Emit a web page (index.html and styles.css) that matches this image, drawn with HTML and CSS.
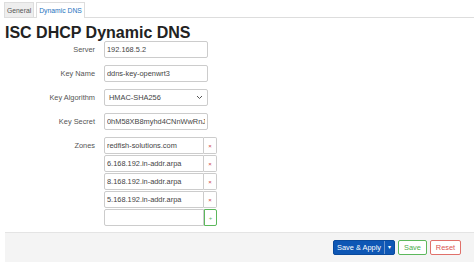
FILE: index.html
```html
<!DOCTYPE html>
<html lang="en">
<head>
  <meta charset="UTF-8" />
  <title>ISC DHCP Dynamic DNS</title>
  <link rel="stylesheet" href="styles.css">
</head>
<body>
  <ul class="tabs">
    <li class="tab">General</li>
    <li class="tab active">Dynamic DNS</li>
  </ul>

  <h2 class="title">ISC DHCP Dynamic DNS</h2>

  <div class="form">
    <div class="row">
      <label class="label">Server</label>
      <div class="field"><input class="text" type="text" value="192.168.5.2"></div>
    </div>
    <div class="row">
      <label class="label">Key Name</label>
      <div class="field"><input class="text" type="text" value="ddns-key-openwrt3"></div>
    </div>
    <div class="row">
      <label class="label">Key Algorithm</label>
      <div class="field">
        <div class="select">HMAC-SHA256
          <svg class="caret" width="7" height="5" viewBox="0 0 7 5"><path d="M1 1l2.5 2.5L6 1" fill="none" stroke="#555" stroke-width="1"/></svg>
        </div>
      </div>
    </div>
    <div class="row">
      <label class="label">Key Secret</label>
      <div class="field"><input class="text" type="text" value="0hM58XB8myhd4CNnWwRnJWhPdq"></div>
    </div>
    <div class="row zones-row">
      <label class="label">Zones</label>
      <div class="field zones">
        <div class="dyn"><input class="text" type="text" value="redfish-solutions.com"><span class="btn-x">&times;</span></div>
        <div class="dyn"><input class="text" type="text" value="6.168.192.in-addr.arpa"><span class="btn-x">&times;</span></div>
        <div class="dyn"><input class="text" type="text" value="8.168.192.in-addr.arpa"><span class="btn-x">&times;</span></div>
        <div class="dyn"><input class="text" type="text" value="5.168.192.in-addr.arpa"><span class="btn-x">&times;</span></div>
        <div class="dyn"><input class="text" type="text" value=""><span class="btn-add">+</span></div>
      </div>
    </div>
  </div>

  <div class="actions">
    <div class="apply">
      <span class="apply-main">Save &amp; Apply</span>
      <span class="apply-drop">&#9662;</span>
    </div>
    <span class="btn save">Save</span>
    <span class="btn reset">Reset</span>
  </div>
</body>
</html>
```

FILE: styles.css
```css
* {
  box-sizing: border-box;
  margin: 0;
  padding: 0;
  font-family: "Liberation Sans", Arial, sans-serif;
}

body {
  background: #fff;
  color: #404040;
  font-size: 7.4px;
  padding: 2px 0 0 5px;
  overflow: hidden;
}

.tabs {
  list-style: none;
  display: flex;
  border-bottom: 1px solid #ddd;
  padding-left: 0;
  height: 16px;
  margin-left: -1px;
}

.tab {
  padding: 0 2px;
  font-size: 6.8px;
  line-height: 15px;
  background: #eee;
  border: 1px solid #ddd;
  border-bottom: none;
  color: #555;
  margin-right: 2px;
}

.tab.active {
  background: #fff;
  color: #1e73be;
  height: 16px;
}

.title {
  font-size: 16px;
  font-weight: bold;
  color: #222;
  margin: 6px 0 0;
  line-height: 17px;
}

.form {
  display: flex;
  flex-direction: column;
  gap: 7px;
}

.row {
  display: flex;
  align-items: center;
}

.zones-row {
  align-items: flex-start;
}

.label {
  width: 99px;
  text-align: right;
  padding-right: 9px;
  color: #555;
}

.zones-row .label {
  line-height: 17px;
}

.field {
  width: 104px;
}

.text {
  width: 104px;
  height: 17px;
  border: 1px solid #ccc;
  border-radius: 2px;
  padding: 0 2px;
  font-size: 7.4px;
  color: #444;
  outline: none;
}

.select {
  height: 17px;
  border: 1px solid #ccc;
  border-radius: 2px;
  padding: 0 4px;
  display: flex;
  align-items: center;
  justify-content: space-between;
  color: #444;
}

.zones {
  display: flex;
  flex-direction: column;
  gap: 1px;
  width: 114px;
}

.dyn {
  display: flex;
  height: 17px;
}

.dyn .text {
  width: 100px;
  border-radius: 2px 0 0 2px;
}

.btn-x,
.btn-add {
  width: 13px;
  height: 17px;
  border: 1px solid #ccc;
  border-left: none;
  border-radius: 0 2px 2px 0;
  display: flex;
  align-items: center;
  justify-content: center;
  color: #c44;
  font-size: 6px;
}

.btn-add {
  border: 1px solid #5cb85c;
  color: #5cb85c;
}

.actions {
  margin-top: 6px;
  background: #f4f4f4;
  border-top: 1px solid #e4e4e4;
  height: 30px;
  display: flex;
  justify-content: flex-end;
  align-items: center;
  padding-right: 13px;
  gap: 3px;
}

.apply {
  display: flex;
  height: 15px;
  background: #0e57b5;
  border: 1px solid #0a4a9c;
  border-radius: 2px;
  color: #fff;
}

.apply-main {
  padding: 0 3px;
  line-height: 13px;
}

.apply-drop {
  border-left: 1px solid #6d95cc;
  width: 10px;
  text-align: center;
  line-height: 13px;
  font-size: 6px;
}

.btn {
  height: 15px;
  line-height: 13px;
  padding: 0 4px;
  border-radius: 2px;
  background: #fff;
}

.save {
  border: 1px solid #5cb85c;
  color: #4cae4c;
  width: 29px;
  text-align: center;
}

.reset {
  border: 1px solid #e0706a;
  color: #d9534f;
  width: 31px;
  text-align: center;
}
```
